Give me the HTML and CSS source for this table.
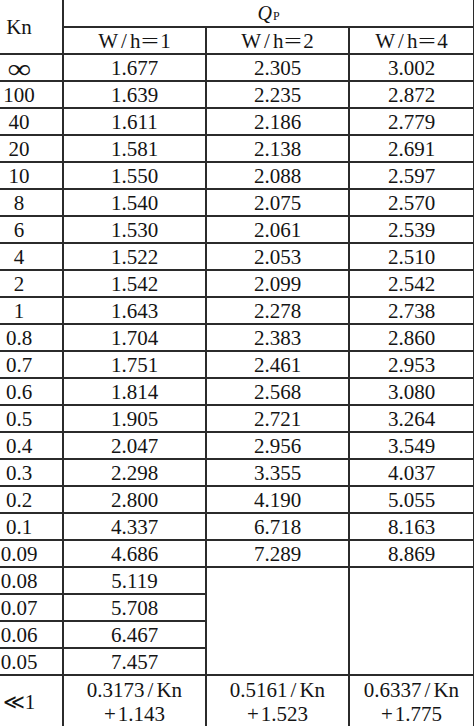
FILE: index.html
```html
<!DOCTYPE html>
<html>
<head>
<meta charset="utf-8">
<link rel="stylesheet" href="styles.css">
</head>
<body>
<table class="qp-table">
  <colgroup>
    <col class="c1"><col class="c2"><col class="c3"><col class="c4">
  </colgroup>
  <thead>
    <tr class="h1">
      <th class="kn" rowspan="2">Kn</th>
      <th class="qp" colspan="3"><i>Q</i><span class="sub">P</span></th>
    </tr>
    <tr class="h2">
      <th>W<span class="sl">/</span>h<span class="eq">=</span>1</th>
      <th>W<span class="sl">/</span>h<span class="eq">=</span>2</th>
      <th>W<span class="sl">/</span>h<span class="eq">=</span>4</th>
    </tr>
  </thead>
  <tbody>
    <tr><td class="kn"><span class="inf">∞</span></td><td>1.677</td><td>2.305</td><td>3.002</td></tr>
    <tr><td class="kn">100</td><td>1.639</td><td>2.235</td><td>2.872</td></tr>
    <tr><td class="kn">40</td><td>1.611</td><td>2.186</td><td>2.779</td></tr>
    <tr><td class="kn">20</td><td>1.581</td><td>2.138</td><td>2.691</td></tr>
    <tr><td class="kn">10</td><td>1.550</td><td>2.088</td><td>2.597</td></tr>
    <tr><td class="kn">8</td><td>1.540</td><td>2.075</td><td>2.570</td></tr>
    <tr><td class="kn">6</td><td>1.530</td><td>2.061</td><td>2.539</td></tr>
    <tr><td class="kn">4</td><td>1.522</td><td>2.053</td><td>2.510</td></tr>
    <tr><td class="kn">2</td><td>1.542</td><td>2.099</td><td>2.542</td></tr>
    <tr><td class="kn">1</td><td>1.643</td><td>2.278</td><td>2.738</td></tr>
    <tr><td class="kn">0.8</td><td>1.704</td><td>2.383</td><td>2.860</td></tr>
    <tr><td class="kn">0.7</td><td>1.751</td><td>2.461</td><td>2.953</td></tr>
    <tr><td class="kn">0.6</td><td>1.814</td><td>2.568</td><td>3.080</td></tr>
    <tr><td class="kn">0.5</td><td>1.905</td><td>2.721</td><td>3.264</td></tr>
    <tr><td class="kn">0.4</td><td>2.047</td><td>2.956</td><td>3.549</td></tr>
    <tr><td class="kn">0.3</td><td>2.298</td><td>3.355</td><td>4.037</td></tr>
    <tr><td class="kn">0.2</td><td>2.800</td><td>4.190</td><td>5.055</td></tr>
    <tr><td class="kn">0.1</td><td>4.337</td><td>6.718</td><td>8.163</td></tr>
    <tr><td class="kn">0.09</td><td>4.686</td><td>7.289</td><td>8.869</td></tr>
    <tr><td class="kn">0.08</td><td>5.119</td><td class="empty" rowspan="4"></td><td class="empty" rowspan="4"></td></tr>
    <tr><td class="kn">0.07</td><td>5.708</td></tr>
    <tr><td class="kn">0.06</td><td>6.467</td></tr>
    <tr><td class="kn">0.05</td><td>7.457</td></tr>
    <tr class="last">
      <td class="kn">≪1</td>
      <td>0.3173<span class="sl">/</span>Kn<br><span class="plus">+</span>1.143</td>
      <td>0.5161<span class="sl">/</span>Kn<br><span class="plus">+</span>1.523</td>
      <td>0.6337<span class="sl">/</span>Kn<br><span class="plus">+</span>1.775</td>
    </tr>
  </tbody>
</table>
</body>
</html>
```

FILE: styles.css
```css
html, body {
  margin: 0;
  padding: 0;
  background: #ffffff;
}

body {
  width: 474px;
  height: 726px;
  overflow: hidden;
  font-family: "Liberation Serif", "DejaVu Serif", serif;
  color: #141414;
}

.qp-table {
  border-collapse: collapse;
  table-layout: fixed;
  width: 474px;
  font-size: 21px;
  line-height: 24px;
}

.c1 { width: 63px; }
.c2 { width: 143px; }
.c3 { width: 143px; }
.c4 { width: 125px; }

.qp-table th,
.qp-table td {
  border: 2px solid #2b2b2b;
  padding: 0;
  text-align: center;
  vertical-align: middle;
  font-weight: normal;
  height: 27px;
  box-sizing: border-box;
}

.qp-table tr > :first-child {
  border-left: none;
}

.qp-table .h1 th {
  border-top: none;
  height: 25px;
}

.qp-table .kn {
  padding-right: 24px;
}

.inf {
  display: inline-block;
  transform: scale(1.6, 1.3);
  position: relative;
  top: 1px;
}

.qp-table .qp {
  line-height: 20px;
  font-size: 20px;
  padding-top: 3px;
}

.qp i {
  font-style: italic;
}

.sub {
  font-size: 12px;
  margin-left: 1px;
}

.sl {
  margin: 0 3px;
}

.eq {
  display: inline-block;
  transform: scaleX(1.5);
  margin: 0 4px;
}

.plus {
  margin-right: 2px;
}

.last td {
  height: 53px;
  padding-top: 2px;
  border-bottom: 3px solid #8a8a8a;
}

.empty {
  border-bottom: 2px solid #2b2b2b;
}
```
